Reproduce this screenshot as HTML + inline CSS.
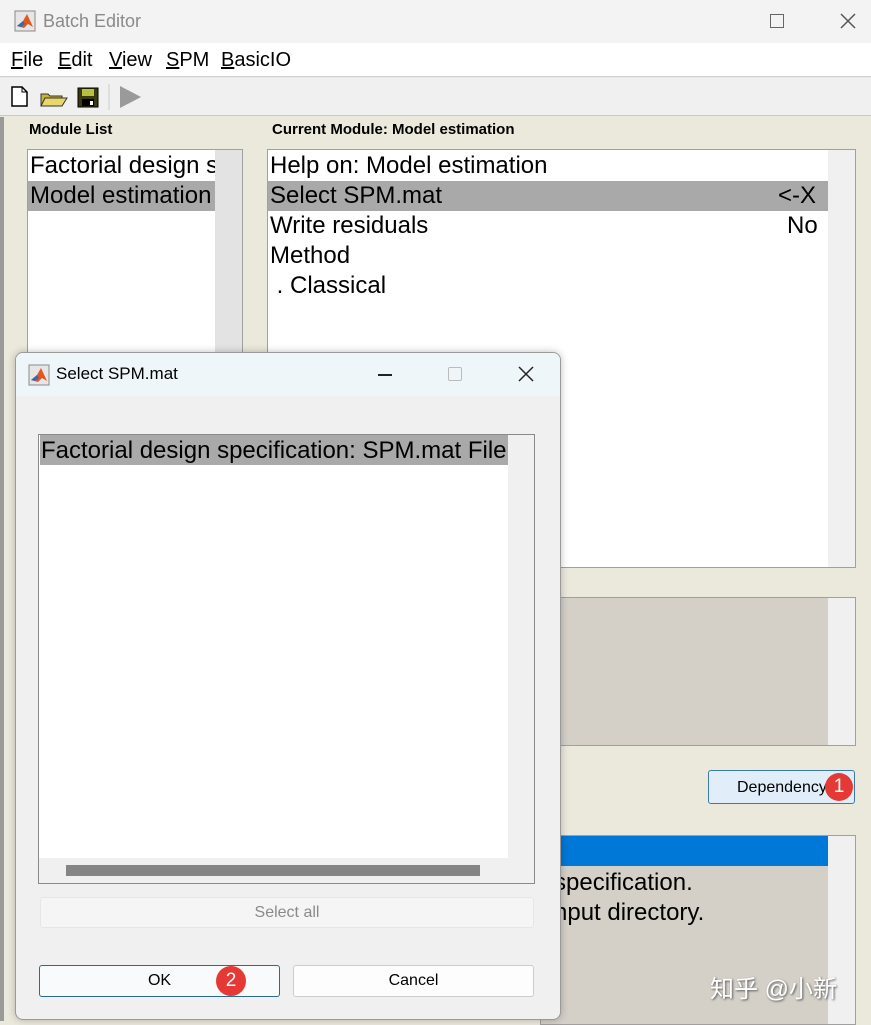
<!DOCTYPE html>
<html><head><meta charset="utf-8"><style>
*{margin:0;padding:0;box-sizing:border-box}
body{width:871px;height:1021px;position:relative;overflow:hidden;background:#ebe8dc;font-family:"Liberation Sans","Noto Sans CJK SC",sans-serif;color:#000}
.a{position:absolute}
.t22{font-size:24px;line-height:30px;white-space:nowrap}
.u{text-decoration:underline}
</style></head><body>
<div class="a" style="left:0;top:0;width:871px;height:43px;background:#f3f3f3"></div>
<svg class="a" style="left:14px;top:10px" width="22" height="22" viewBox="0 0 22 22"><rect x="1" y="1" width="20" height="20" fill="#e6e6e6" stroke="#8a8a8a"/><path d="M3 16 L9 11 L13 4 L19 17 L14 14 L10 18Z" fill="#e2571e"/><path d="M3 16 L9 11 L11 14 L7 17Z" fill="#2e6db4"/></svg>
<div class="a" style="left:43px;top:11px;font-size:18px;color:#8a8a8a">Batch Editor</div>
<div class="a" style="left:770px;top:14px;width:14px;height:14px;border:1.5px solid #666"></div>
<svg class="a" style="left:840px;top:13px" width="16" height="16"><path d="M1 1L15 15M15 1L1 15" stroke="#555" stroke-width="1.5"/></svg>
<div class="a" style="left:0;top:43px;width:871px;height:34px;background:#fff;border-bottom:1px solid #d0d0d0"></div>
<div class="a" style="left:11px;top:49px;font-size:20px;white-space:nowrap"><span class="u">F</span>ile</div>
<div class="a" style="left:58px;top:49px;font-size:20px"><span class="u">E</span>dit</div>
<div class="a" style="left:109px;top:49px;font-size:20px"><span class="u">V</span>iew</div>
<div class="a" style="left:166px;top:49px;font-size:20px"><span class="u">S</span>PM</div>
<div class="a" style="left:221px;top:49px;font-size:20px"><span class="u">B</span>asicIO</div>
<div class="a" style="left:0;top:78px;width:871px;height:38px;background:#f0f0f0;border-bottom:1px solid #c8c8c8"></div>
<svg class="a" style="left:8px;top:84px" width="140" height="26"><path d="M4 3H14L19 8V22H4Z" fill="#fff" stroke="#000" stroke-width="1.5"/><path d="M14 3V8H19" fill="none" stroke="#000"/>
<path d="M33 10H40L42 12H54V22H33Z" fill="#c8b23a" stroke="#333"/><path d="M33 22L37 14H59L54 22Z" fill="#e8d868" stroke="#333"/>
<rect x="70" y="4" width="20" height="19" fill="#3a3a10" stroke="#000"/><rect x="74" y="5" width="12" height="7" fill="#b8c040"/><rect x="74" y="15" width="12" height="7" fill="#000"/><rect x="82" y="17" width="3" height="4" fill="#fff"/>
<line x1="101" y1="0" x2="101" y2="26" stroke="#ccc"/><path d="M112 2L133 13L112 24Z" fill="#9a9a9a"/></svg>
<div class="a" style="left:0;top:117px;width:4px;height:904px;background:#9a9a9a"></div>
<div class="a" style="left:29px;top:121px;font-size:15px;font-weight:bold">Module List</div>
<div class="a" style="left:272px;top:121px;font-size:15px;font-weight:bold">Current Module: Model estimation</div>
<div class="a" style="left:27px;top:149px;width:216px;height:220px;background:#fff;border:1px solid #a0a0a0;overflow:hidden">
<div class="a" style="left:187px;top:0;width:28px;height:220px;background:#e3e3e3"></div>
<div class="a" style="left:0;top:31px;width:187px;height:30px;background:#a9a9a9"></div>
<div class="a t22" style="left:2px;top:1px;width:185px;overflow:hidden">Factorial design s</div>
<div class="a t22" style="left:2px;top:31px;width:185px;overflow:hidden">Model estimation</div>
</div>
<div class="a" style="left:267px;top:149px;width:589px;height:419px;background:#fff;border:1px solid #a0a0a0">
<div class="a" style="left:560px;top:0;width:27px;height:417px;background:#f0f0f0"></div>
<div class="a" style="left:0;top:31px;width:560px;height:30px;background:#a9a9a9"></div>
<div class="a t22" style="left:2px;top:1px">Help on: Model estimation</div>
<div class="a t22" style="left:2px;top:31px">Select SPM.mat</div>
<div class="a t22" style="left:510px;top:31px">&lt;-X</div>
<div class="a t22" style="left:519px;top:61px">No</div>
<div class="a t22" style="left:2px;top:61px">Write residuals</div>
<div class="a t22" style="left:2px;top:91px">Method</div>
<div class="a t22" style="left:2px;top:121px">&nbsp;. Classical</div>
</div>
<div class="a" style="left:540px;top:597px;width:316px;height:149px;background:#d4d0c8;border:1px solid #a0a0a0">
<div class="a" style="left:287px;top:0;width:27px;height:147px;background:#f0f0f0"></div></div>
<div class="a" style="left:708px;top:770px;width:147px;height:34px;background:#e1eef9;border:1px solid #3b79a8;border-radius:3px;font-size:16px;line-height:34px;padding-left:28px">Dependency</div>
<div class="a" style="left:825px;top:773px;width:28px;height:28px;border-radius:50%;background:#e53935;color:#fff;font-size:19px;line-height:28px;text-align:center">1</div>
<div class="a" style="left:540px;top:835px;width:316px;height:190px;background:#d4d0c8;border:1px solid #a0a0a0;overflow:hidden">
<div class="a" style="left:0;top:0;width:287px;height:30px;background:#0078d7"></div>
<div class="a" style="left:287px;top:0;width:27px;height:190px;background:#f0f0f0"></div>
<div class="a t22" style="left:13px;top:32px">specification.</div>
<div class="a t22" style="left:13px;top:62px">nput directory.</div>
</div>
<div class="a" style="left:710px;top:969px;font-size:24px;color:#fff;text-shadow:1px 1px 2px #555">知乎 @小新</div>
<div class="a" style="left:15px;top:352px;width:546px;height:668px;background:#f0f0f0;border:1px solid #9a9a9a;border-radius:8px;overflow:hidden;box-shadow:0 0 8px rgba(0,0,0,.25)">
<div class="a" style="left:0;top:0;width:546px;height:43px;background:#eef6f9"></div>
<svg class="a" style="left:12px;top:11px" width="22" height="22" viewBox="0 0 22 22"><rect x="1" y="1" width="20" height="20" fill="#e6e6e6" stroke="#8a8a8a"/><path d="M3 16 L9 11 L13 4 L19 17 L14 14 L10 18Z" fill="#e2571e"/><path d="M3 16 L9 11 L11 14 L7 17Z" fill="#2e6db4"/></svg>
<div class="a" style="left:40px;top:11px;font-size:17px">Select SPM.mat</div>
<div class="a" style="left:362px;top:21px;width:14px;height:1.5px;background:#222"></div>
<div class="a" style="left:432px;top:14px;width:14px;height:14px;border:1px solid #bbb;border-radius:2px"></div>
<svg class="a" style="left:502px;top:13px" width="16" height="16"><path d="M1 1L15 15M15 1L1 15" stroke="#222" stroke-width="1.5"/></svg>
<div class="a" style="left:22px;top:81px;width:497px;height:450px;background:#fff;border:1px solid #8a8a8a;overflow:hidden">
<div class="a" style="left:469px;top:0;width:27px;height:450px;background:#f0f0f0"></div>
<div class="a" style="left:0;top:423px;width:496px;height:27px;background:#f0f0f0"></div>
<div class="a" style="left:27px;top:430px;width:414px;height:11px;background:#858585"></div>
<div class="a" style="left:1px;top:0;width:468px;height:30px;background:#a9a9a9"></div>
<div class="a t22" style="left:2px;top:1px;width:467px;overflow:hidden">Factorial design specification: SPM.mat File</div>
</div>
<div class="a" style="left:24px;top:544px;width:494px;height:31px;background:#f5f5f5;border:1px solid #e6e6e6;border-radius:3px;text-align:center;font-size:16px;line-height:30px;color:#8a8a8a">Select all</div>
<div class="a" style="left:23px;top:612px;width:241px;height:32px;background:#f8fafc;border:1px solid #2a6a98;border-radius:3px;text-align:center;font-size:16px;line-height:30px">OK</div>
<div class="a" style="left:200px;top:613px;width:30px;height:30px;border-radius:50%;background:#e53935;color:#fff;font-size:19px;line-height:30px;text-align:center">2</div>
<div class="a" style="left:277px;top:612px;width:241px;height:32px;background:#fdfdfd;border:1px solid #ccc;border-radius:3px;text-align:center;font-size:16px;line-height:30px">Cancel</div>
</div>
</body></html>
